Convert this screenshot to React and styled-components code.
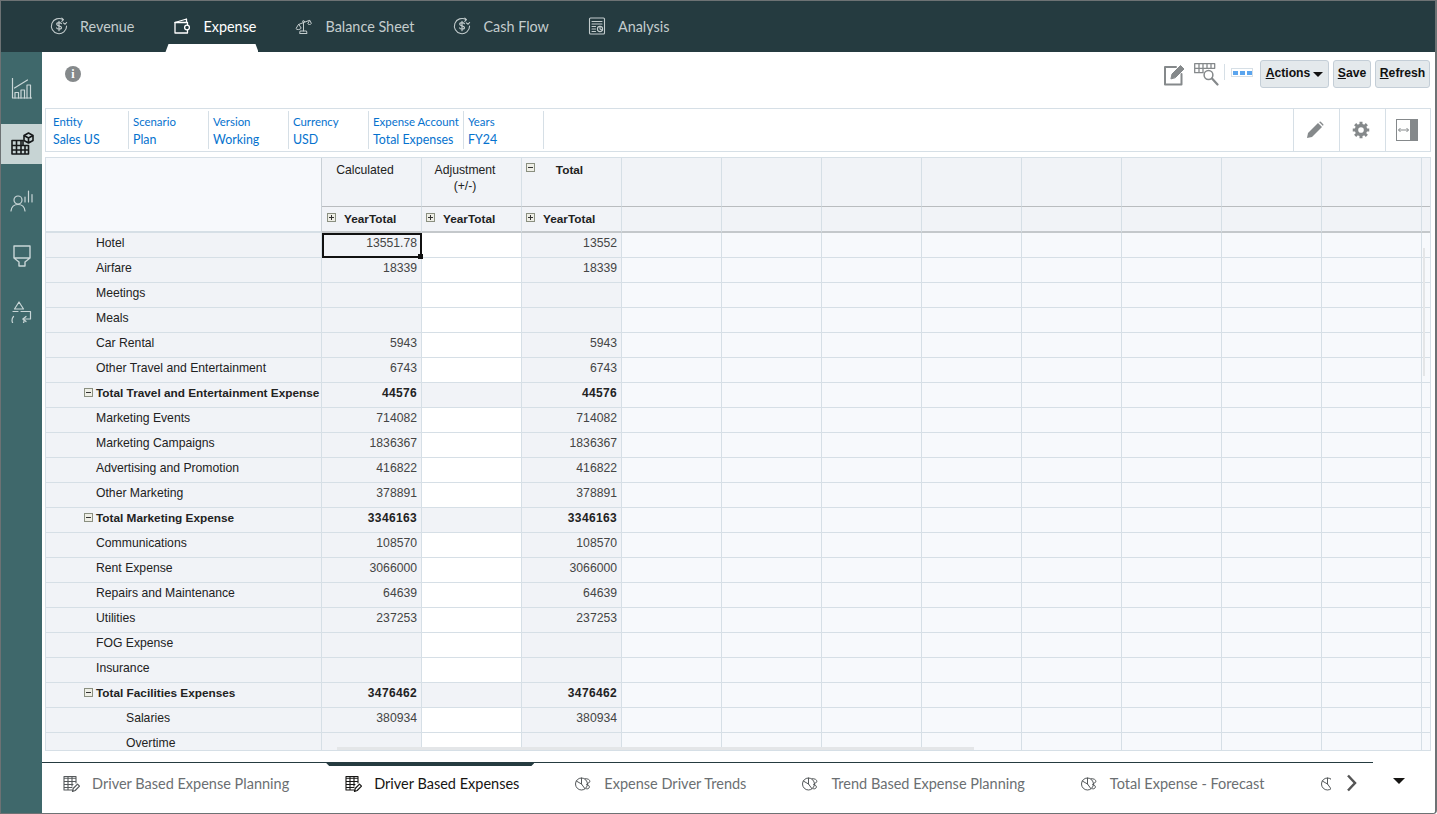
import React from 'react';
import styled, { createGlobalStyle } from 'styled-components';

const GlobalStyle = createGlobalStyle`
  html, body { margin: 0; padding: 0; background: #fff; overflow: hidden; }
  * { box-sizing: border-box; }
`;

const Frame = styled.div`
  width: 1437px;
  height: 814px;
  border: 1px solid #6d7274;
  border-right-width: 2px;
  border-radius: 0 0 4px 0;
  display: flex;
  flex-direction: column;
  overflow: hidden;
  font-family: "Liberation Sans", Arial, sans-serif;
`;

const TopBar = styled.nav`
  height: 51px;
  flex: none;
  background: #253b40;
  display: flex;
  align-items: stretch;
  gap: 39px;
  padding-left: 49px;
`;

const TopTab = styled.div`
  position: relative;
  display: flex;
  align-items: center;
  gap: 12px;
  padding-bottom: 1px;
  font-family: Lato, sans-serif;
  font-size: 14.4px;
  color: ${(p) => (p.$active ? '#ffffff' : '#c3cccd')};
  svg { color: ${(p) => (p.$active ? '#ffffff' : '#c3cccd')}; }
  ${(p) =>
    p.$active &&
    `&::after {
      content: '';
      position: absolute;
      left: -8px;
      right: -2px;
      bottom: 0;
      height: 8px;
      background: #fff;
      clip-path: polygon(3px 0, calc(100% - 3px) 0, 100% 100%, 0 100%);
    }`}
`;

const Body = styled.div`
  flex: 1;
  min-height: 0;
  display: flex;
`;

const SideBar = styled.aside`
  width: 41px;
  flex: none;
  background: #3f686b;
  display: flex;
  flex-direction: column;
`;

const SideItem = styled.div`
  height: ${(p) => p.$h}px;
  width: 41px;
  flex: none;
  margin-bottom: ${(p) => (p.$active ? '8px' : '0')};
  display: flex;
  align-items: center;
  justify-content: center;
  color: ${(p) => (p.$active ? '#16191a' : '#c9d6d7')};
  background: ${(p) => (p.$active ? '#c7d4d4' : 'transparent')};
`;

const Main = styled.main`
  flex: 1;
  min-width: 0;
  display: flex;
  flex-direction: column;
  background: #fff;
`;

const Toolbar = styled.div`
  height: 56px;
  flex: none;
  display: flex;
  align-items: flex-start;
  justify-content: space-between;
  padding: 8px 5px 0 23px;
`;

const InfoDot = styled.div`
  width: 16px;
  height: 16px;
  margin-top: 6px;
  border-radius: 50%;
  background: #85898b;
  color: #fff;
  font: bold 12px/16px "Liberation Serif", serif;
  text-align: center;
`;

const ToolGroup = styled.div`
  display: flex;
  align-items: flex-start;
  gap: 4px;
`;

const ToolIcons = styled.div`
  display: flex;
  align-items: flex-start;
  margin: 3px 3px 0 0;
  color: #85898b;
`;

const ToolButton = styled.button`
  width: ${(p) => p.$w}px;
  height: 28px;
  padding: 0 0 2px;
  border: 1px solid #c4ced7;
  border-radius: 3px;
  background: #e4e9ec;
  color: #111;
  font: bold 12.2px "Liberation Sans", Arial, sans-serif;
  display: flex;
  align-items: center;
  justify-content: center;
  gap: 3px;
  u { text-decoration: underline; }
`;

const Caret = styled.span`
  width: 0;
  height: 0;
  margin-top: 3px;
  border-left: 5px solid transparent;
  border-right: 5px solid transparent;
  border-top: 5px solid #111;
`;

const PovBar = styled.div`
  height: 44px;
  flex: none;
  margin: 0 4px 0 3px;
  border: 1px solid #d6dfe6;
  display: flex;
  align-items: center;
  font-family: Lato, sans-serif;
  color: #0572ce;
`;

const PovItem = styled.div`
  width: ${(p) => p.$w}px;
  height: 38px;
  padding: 1px 0 0 ${(p) => p.$pad}px;
  border-right: 1px solid #d6dfe6;
  display: flex;
  flex-direction: column;
  justify-content: center;
  gap: 3px;
  flex: none;
  white-space: nowrap;
`;

const PovLabel = styled.span`
  font-size: 11.4px;
  line-height: 14px;
`;

const PovValue = styled.span`
  font-size: 12.4px;
  line-height: 15px;
`;

const PovTools = styled.div`
  margin-left: auto;
  display: flex;
  height: 42px;
`;

const PovTool = styled.div`
  width: 46px;
  padding-right: 3px;
  border-left: 1px solid #d6dfe6;
  display: flex;
  align-items: center;
  justify-content: center;
  color: #85898b;
  &:last-child { width: 45px; padding-right: 2px; }
`;

const GridWrap = styled.div`
  position: relative;
  height: 594px;
  flex: none;
  margin: 5px 4px 0 3px;
  border: 1px solid #d6dfe6;
  overflow: hidden;
  background: #f7f9fc;
`;

const Grid = styled.div`
  display: grid;
  grid-template-columns: 276px repeat(11, 100px) 9px;
  grid-template-rows: 49px 26px;
  grid-auto-rows: 25px;
  font-size: 12.2px;
  color: #222;
`;

const Corner = styled.div`
  grid-row: 1 / span 2;
  background: #f7f9fc;
  border-right: 1px solid #c9d0d6;
  border-bottom: 2px solid #d6dfe6;
`;

const HeadCell = styled.div`
  position: relative;
  background: #f1f3f7;
  border-right: 1px solid #d6dfe6;
  border-bottom: 1px solid #b9bcbf;
  text-align: center;
  line-height: 16px;
  padding: 4px ${(p) => (p.$bold ? '4px' : '13px')} 0 0;
  font-size: ${(p) => (p.$bold ? '11.8px' : '12.2px')};
  font-weight: ${(p) => (p.$bold ? 'bold' : 'normal')};
`;

const HeadSub = styled.div`
  background: #f1f3f7;
  border-right: 1px solid #d6dfe6;
  border-bottom: 2px solid #c4c8cb;
  display: flex;
  align-items: center;
  gap: 8px;
  padding-left: ${(p) => p.$pad || 4}px;
  font-size: 11.8px;
  font-weight: bold;
`;

const Toggle = styled.span`
  width: 9px;
  height: 9px;
  flex: none;
  border: 1px solid #8a8f80;
  background: #eeeee6;
  position: relative;
  margin-top: -3px;
  &::before {
    content: '';
    position: absolute;
    left: 1px;
    right: 1px;
    top: 3px;
    height: 1px;
    background: #333;
  }
  ${(p) =>
    p.$plus &&
    `&::after {
      content: '';
      position: absolute;
      top: 1px;
      bottom: 1px;
      left: 3px;
      width: 1px;
      background: #333;
    }`}
`;

const CornerToggle = styled(Toggle)`
  position: absolute;
  left: 4px;
  top: 5px;
  margin: 0;
`;

const RowHead = styled.div`
  background: #f1f3f7;
  border-right: 1px solid #d6dfe6;
  border-bottom: 1px solid #d6dfe6;
  display: flex;
  align-items: center;
  padding-bottom: 5px;
  padding-left: ${(p) => p.$indent}px;
  font-size: ${(p) => (p.$bold ? '11.8px' : '12.2px')};
  font-weight: ${(p) => (p.$bold ? 'bold' : 'normal')};
  white-space: nowrap;
  gap: 3px;
  ${Toggle} { margin-top: 0; }
`;

const DataCell = styled.div`
  position: relative;
  background: ${(p) => (p.$tone === 'white' ? '#fff' : p.$tone === 'blank' ? '#f7f9fc' : '#f1f3f7')};
  border-right: 1px solid #d6dfe6;
  border-bottom: 1px solid #d6dfe6;
  padding: 0 4px 5px 0;
  display: flex;
  align-items: center;
  justify-content: flex-end;
  font-size: ${(p) => (p.$bold ? '12px' : '12.2px')};
  letter-spacing: ${(p) => (p.$bold ? '.35px' : '0')};
  font-weight: ${(p) => (p.$bold ? 'bold' : 'normal')};
  color: ${(p) => (p.$bold ? '#222' : '#444')};
`;

const SelectedBox = styled.div`
  position: absolute;
  z-index: 2;
  inset: 0 -1px -1px 0;
  border: 2px solid #111;
  &::after {
    content: '';
    position: absolute;
    right: -3px;
    bottom: -3px;
    width: 5px;
    height: 5px;
    background: #111;
  }
`;

const HScroll = styled.div`
  position: absolute;
  z-index: 3;
  left: 291px;
  bottom: 0;
  width: 637px;
  height: 3px;
  background: #e4e6e8;
`;

const VScroll = styled.div`
  position: absolute;
  z-index: 3;
  right: 5px;
  top: 90px;
  width: 2px;
  height: 128px;
  background: #e4e6e8;
`;

const TabBar = styled.div`
  position: relative;
  margin-top: 11px;
  flex: 1;
  display: flex;
`;

const TabStrip = styled.div`
  width: 1331px;
  flex: none;
  border-top: 1px solid #253b40;
  display: flex;
  gap: 55px;
  padding-left: 20px;
  font-family: Lato, sans-serif;
  font-size: 14.5px;
  overflow: hidden;
  position: relative;
`;

const BottomTab = styled.div`
  position: relative;
  flex: none;
  height: 41px;
  display: flex;
  align-items: center;
  gap: 12px;
  white-space: nowrap;
  color: ${(p) => (p.$active ? '#161513' : '#6b6f72')};
  svg { color: ${(p) => (p.$active ? '#161513' : '#55595b')}; }
  ${(p) =>
    p.$active &&
    `&::before {
      content: '';
      position: absolute;
      left: -18px;
      right: -15px;
      top: 0;
      height: 3px;
      background: #253b40;
      clip-path: polygon(0 0, 100% 0, calc(100% - 3px) 100%, 3px 100%);
    }`}
`;

const PagerMask = styled.div`
  position: absolute;
  left: 1289px;
  width: 42px;
  height: 100%;
  top: 0;
  background: #fff;
`;

const Pager = styled.div`
  flex: 1;
  display: flex;
  align-items: flex-start;
  padding: 16px 0 0 20px;
`;

const DownCaret = styled.span`
  width: 0;
  height: 0;
  border-left: 6px solid transparent;
  border-right: 6px solid transparent;
  border-top: 6px solid #161513;
`;

const NextIcon = styled.div`
  position: absolute;
  left: 1304px;
  top: 11px;
  color: #555;
`;

const SepDots = styled.div`
  width: 22px;
  height: 9px;
  margin: 5px 0 0 6px;
  border: 1px solid #d6dfe6;
  display: flex;
  align-items: center;
  justify-content: center;
  gap: 2px;
  span { width: 5px; height: 4px; background: #5ba5ee; }
`;

const VRule = styled.div`
  width: 1px;
  height: 16px;
  margin: 1px 0 0 5px;
  background: #d6dfe6;
`;

const SearchWrap = styled.div`
  margin-left: 8px;
`;

const Svg = ({ size = 20, w, h, vb = '0 0 24 24', sw = 1.2, children }) => (
  <svg
    width={w || size}
    height={h || size}
    viewBox={vb}
    fill="none"
    stroke="currentColor"
    strokeWidth={sw}
    strokeLinecap="round"
    strokeLinejoin="round"
  >
    {children}
  </svg>
);

const RevenueIcon = () => (
  <Svg size={18} vb="0 0 18 18" sw={1.1}>
    <path d="M13 2.600A7.600 7.600 0 1 0 16.600 9" />
    <path d="M11.800 1.200l1.600 1.500-1.600 1.700M16.600 5.500l-1.500 1.700-1.800-1.300" />
    <path d="M11.400 6.700C10.900 6 10 5.700 9 5.700c-1.300 0-2.300.6-2.300 1.600 0 2.100 4.800 1.200 4.800 3.300 0 1-1 1.600-2.400 1.600-1.100 0-2-.4-2.500-1.200M9 4.300v9.400" strokeWidth="1.200" />
  </Svg>
);

const WalletIcon = () => (
  <Svg size={18} vb="0 0 18 18" sw={1.3}>
    <path d="M13.500 5V2L2 5.500" />
    <path d="M2 5.500V16h12.500v-3M14.500 8V5.500H2" />
    <circle cx="14" cy="10.500" r="2.400" />
  </Svg>
);

const BalanceIcon = () => (
  <Svg size={18} vb="0 0 18 18" sw={1}>
    <path d="M3.500 7.500L14 3.500M8.500 5.500V14" />
    <path d="M5.500 14h6l.5 2.500H5z" />
    <path d="M3.500 7.500L1 11.500c.5 1.500 4 1.500 5 0z" />
    <path d="M14.500 3.500L12.800 6.800c.4 1 2.800 1 3.400 0z" />
    <circle cx="8.500" cy="4.500" r=".9" />
  </Svg>
);

const AnalysisIcon = () => (
  <Svg size={18} vb="0 0 18 18" sw={1.1}>
    <rect x="1.500" y="1" width="15" height="16" rx="1" />
    <path d="M4 4.500h10M4 7h10M4 9.500h3.500M4 12h3.500M4 14.500h3.500" />
    <circle cx="12" cy="12" r="2.600" />
    <path d="M12 12V9.400M12 12l2.300 1.200" />
  </Svg>
);

const ChartIcon = () => (
  <Svg size={21} vb="0 0 21 21" sw={1.2}>
    <path d="M1.500 .5v19.500h19" />
    <path d="M3.500 10L16.500 2" />
    <path d="M4 20v-5.500h3.500V20M10 20v-8h3.500v8M16 20V7h3.500v13" />
  </Svg>
);

const GridCubeIcon = () => (
  <Svg size={24} vb="0 0 24 24" sw={1.6}>
    <path d="M2 8.500h11v5h5.500V22H2zM2 13.500h16.500M2 18h16.500M6.500 8.500V22M11 8.500V22M15 13.500V22" />
    <path d="M18.500 1l4.500 2.500v5l-4.500 2.500L14 8.500v-5zM14 3.500L18.500 6 23 3.500M18.500 6v5" />
  </Svg>
);

const PersonBarsIcon = () => (
  <Svg size={23} vb="0 0 23 23" sw={1.2}>
    <circle cx="8" cy="11" r="4" />
    <path d="M1 22c.5-4.500 3-6.500 7-6.500s6.500 2 7 6.500" />
    <path d="M15 8v5M18.500 2v11M22 5.500V13" />
  </Svg>
);

const FunnelIcon = () => (
  <Svg w={18} h={22} vb="0 0 18 22" sw={1.4}>
    <path d="M1 1h16v12H1zM1 13l5 4v4h6v-4l5-4" />
  </Svg>
);

const ShapesIcon = () => (
  <Svg size={22} vb="0 0 22 22" sw={1.2}>
    <path d="M8 1l4.500 7h-9z" />
    <path d="M2 10.500h5M10 10.500h9.500V18H12" />
    <path d="M2.500 15.500a6 6 0 1 0 10.500 3" />
    <path d="M15 15.500L12 18l3 2.500" />
  </Svg>
);

const NoteEditIcon = () => (
  <Svg w={23} h={23} vb="0 0 23 23" sw={2}>
    <path d="M13 4H2v17.500h16.500V11" />
    <path d="M8 15.500l1-4.500 8.500-8.500 3.500 3.500-8.500 8.500z" fill="currentColor" strokeWidth="1" />
  </Svg>
);

const GridSearchIcon = () => (
  <Svg w={25} h={23} vb="0 0 25 23" sw={1.3}>
    <path d="M.7 .7h20v4.600H.7zM.7 5.300v4.400h8.500M5 .7v9M9 .7v8M13 .7v4.600M17 .7v4.600" />
    <circle cx="14.500" cy="12" r="4.400" strokeWidth="1.500" />
    <path d="M18 15.500l5.500 6" strokeWidth="2.200" />
  </Svg>
);

const PencilIcon = () => (
  <svg width="18" height="18" viewBox="0 0 18 18" fill="currentColor">
    <path d="M1 17l1-5L12 2l4 4L6 16z" />
    <path d="M13 1l1.500-.5 3 3L17 5z" />
  </svg>
);

const GearIcon = () => (
  <svg width="18" height="18" viewBox="0 0 24 24" fill="none" stroke="currentColor" strokeWidth="4.500">
    <circle cx="12" cy="12" r="6" />
    <path d="M12 1v4M12 19v4M1 12h4M19 12h4M4.200 4.200l2.800 2.800M17 17l2.800 2.800M4.200 19.800L7 17M17 7l2.800-2.800" strokeWidth="4" />
  </svg>
);

const ExpandIcon = () => (
  <svg width="22" height="22" viewBox="0 0 22 22">
    <rect x=".5" y=".5" width="21" height="21" fill="#fff" stroke="#85898b" />
    <rect x="14" y="0" width="8" height="22" fill="#85898b" />
    <path d="M2.500 11h10M2.500 11l2-2M2.500 11l2 2M12.500 11l-2-2M12.500 11l-2 2" stroke="#85898b" fill="none" />
  </svg>
);

const FormIcon = () => (
  <Svg size={18} vb="0 0 18 18" sw={1.1}>
    <path d="M2 1.500h12V8M2 1.500V15h8M2 3.300h12M2 6.500h11M2 9.500h9M2 12.500h8M6 1.500V15M10 1.500V11" />
    <path d="M10.500 16.500l.7-3 4.300-4.300 2 2-4.300 4.300z" strokeWidth="1.200" />
  </Svg>
);

const PieIcon = () => (
  <Svg size={18} vb="0 0 18 18" sw={1}>
    <circle cx="7.500" cy="9" r="6" />
    <path d="M7.500 3v6l3.500 4.800M7.500 9L2.300 6" />
    <path d="M11 3.700c3-.2 5 1 5 3l-3.500 2.800c2.500.4 3.500 2 2.500 3.500-.5.800-1.500 1-2.500.8" />
  </Svg>
);

const NextChevron = () => (
  <svg width="12" height="18" viewBox="0 0 12 18" fill="none" stroke="currentColor" strokeWidth="2.500">
    <path d="M2 1.500l7 7.500-7 7.500" />
  </svg>
);

const topTabs = [
  { label: 'Revenue', icon: <RevenueIcon /> },
  { label: 'Expense', icon: <WalletIcon />, active: true },
  { label: 'Balance Sheet', icon: <BalanceIcon /> },
  { label: 'Cash Flow', icon: <RevenueIcon /> },
  { label: 'Analysis', icon: <AnalysisIcon /> },
];

const sideItems = [
  { icon: <ChartIcon />, h: 72 },
  { icon: <GridCubeIcon />, active: true, h: 40 },
  { icon: <PersonBarsIcon />, h: 56 },
  { icon: <FunnelIcon />, h: 56 },
  { icon: <ShapesIcon />, h: 56 },
];

const povItems = [
  { label: 'Entity', value: 'Sales US', w: 83, pad: 7 },
  { label: 'Scenario', value: 'Plan', w: 80, pad: 4 },
  { label: 'Version', value: 'Working', w: 80, pad: 4 },
  { label: 'Currency', value: 'USD', w: 80, pad: 4 },
  { label: 'Expense Account', value: 'Total Expenses', w: 95, pad: 4 },
  { label: 'Years', value: 'FY24', w: 80, pad: 4 },
];

const rows = [
  { name: 'Hotel', calc: '13551.78', total: '13552', selected: true },
  { name: 'Airfare', calc: '18339', total: '18339' },
  { name: 'Meetings' },
  { name: 'Meals' },
  { name: 'Car Rental', calc: '5943', total: '5943' },
  { name: 'Other Travel and Entertainment', calc: '6743', total: '6743' },
  { name: 'Total Travel and Entertainment Expense', calc: '44576', total: '44576', bold: true },
  { name: 'Marketing Events', calc: '714082', total: '714082' },
  { name: 'Marketing Campaigns', calc: '1836367', total: '1836367' },
  { name: 'Advertising and Promotion', calc: '416822', total: '416822' },
  { name: 'Other Marketing', calc: '378891', total: '378891' },
  { name: 'Total Marketing Expense', calc: '3346163', total: '3346163', bold: true },
  { name: 'Communications', calc: '108570', total: '108570' },
  { name: 'Rent Expense', calc: '3066000', total: '3066000' },
  { name: 'Repairs and Maintenance', calc: '64639', total: '64639' },
  { name: 'Utilities', calc: '237253', total: '237253' },
  { name: 'FOG Expense' },
  { name: 'Insurance' },
  { name: 'Total Facilities Expenses', calc: '3476462', total: '3476462', bold: true },
  { name: 'Salaries', calc: '380934', total: '380934', deep: true },
  { name: 'Overtime', deep: true },
];

const bottomTabs = [
  { label: 'Driver Based Expense Planning', icon: <FormIcon /> },
  { label: 'Driver Based Expenses', icon: <FormIcon />, active: true },
  { label: 'Expense Driver Trends', icon: <PieIcon /> },
  { label: 'Trend Based Expense Planning', icon: <PieIcon /> },
  { label: 'Total Expense - Forecast', icon: <PieIcon /> },
  { label: '', icon: <PieIcon /> },
];

const blanks = (key, count) =>
  Array.from({ length: count }, (_, i) => <DataCell key={`${key}-${i}`} $tone="blank" />);

const App = () => {
  return (
    <>
      <GlobalStyle />
      <Frame>
        <TopBar>
          {topTabs.map((tab) => (
            <TopTab key={tab.label} $active={tab.active}>
              {tab.icon}
              {tab.label}
            </TopTab>
          ))}
        </TopBar>
        <Body>
          <SideBar>
            {sideItems.map((item, i) => (
              <SideItem key={i} $active={item.active} $h={item.h}>
                {item.icon}
              </SideItem>
            ))}
          </SideBar>
          <Main>
            <Toolbar>
              <InfoDot>i</InfoDot>
              <ToolGroup>
                <ToolIcons>
                  <NoteEditIcon />
                  <SearchWrap>
                    <GridSearchIcon />
                  </SearchWrap>
                  <VRule />
                  <SepDots>
                    <span />
                    <span />
                    <span />
                  </SepDots>
                </ToolIcons>
                <ToolButton $w={69}>
                  <span>
                    <u>A</u>ctions
                  </span>
                  <Caret />
                </ToolButton>
                <ToolButton $w={38}>
                  <span>
                    <u>S</u>ave
                  </span>
                </ToolButton>
                <ToolButton $w={55}>
                  <span>
                    <u>R</u>efresh
                  </span>
                </ToolButton>
              </ToolGroup>
            </Toolbar>
            <PovBar>
              {povItems.map((item) => (
                <PovItem key={item.label} $w={item.w} $pad={item.pad}>
                  <PovLabel>{item.label}</PovLabel>
                  <PovValue>{item.value}</PovValue>
                </PovItem>
              ))}
              <PovTools>
                <PovTool>
                  <PencilIcon />
                </PovTool>
                <PovTool>
                  <GearIcon />
                </PovTool>
                <PovTool>
                  <ExpandIcon />
                </PovTool>
              </PovTools>
            </PovBar>
            <GridWrap>
              <Grid>
                <Corner />
                <HeadCell>Calculated</HeadCell>
                <HeadCell>
                  Adjustment
                  <br />
                  (+/-)
                </HeadCell>
                <HeadCell $bold>
                  <CornerToggle />
                  Total
                </HeadCell>
                {Array.from({ length: 9 }, (_, i) => (
                  <HeadCell key={i} />
                ))}
                {[5, 4, 4].map((pad, i) => (
                  <HeadSub key={i} $pad={pad}>
                    <Toggle $plus />
                    YearTotal
                  </HeadSub>
                ))}
                {Array.from({ length: 9 }, (_, i) => (
                  <HeadSub key={i} />
                ))}
                {rows.map((row) => (
                  <React.Fragment key={row.name}>
                    <RowHead $indent={row.bold ? 38 : row.deep ? 80 : 50} $bold={row.bold}>
                      {row.bold && <Toggle />}
                      {row.name}
                    </RowHead>
                    <DataCell $bold={row.bold}>
                      {row.calc}
                      {row.selected && <SelectedBox />}
                    </DataCell>
                    <DataCell $tone={row.bold ? undefined : 'white'} />
                    <DataCell $bold={row.bold}>{row.total}</DataCell>
                    {blanks(row.name, 9)}
                  </React.Fragment>
                ))}
              </Grid>
              <HScroll />
              <VScroll />
            </GridWrap>
            <TabBar>
              <TabStrip>
                {bottomTabs.map((tab, i) => (
                  <BottomTab key={i} $active={tab.active}>
                    {tab.icon}
                    {tab.label}
                  </BottomTab>
                ))}
                <PagerMask />
                <NextIcon>
                  <NextChevron />
                </NextIcon>
              </TabStrip>
              <Pager>
                <DownCaret />
              </Pager>
            </TabBar>
          </Main>
        </Body>
      </Frame>
    </>
  );
};

export default App;
